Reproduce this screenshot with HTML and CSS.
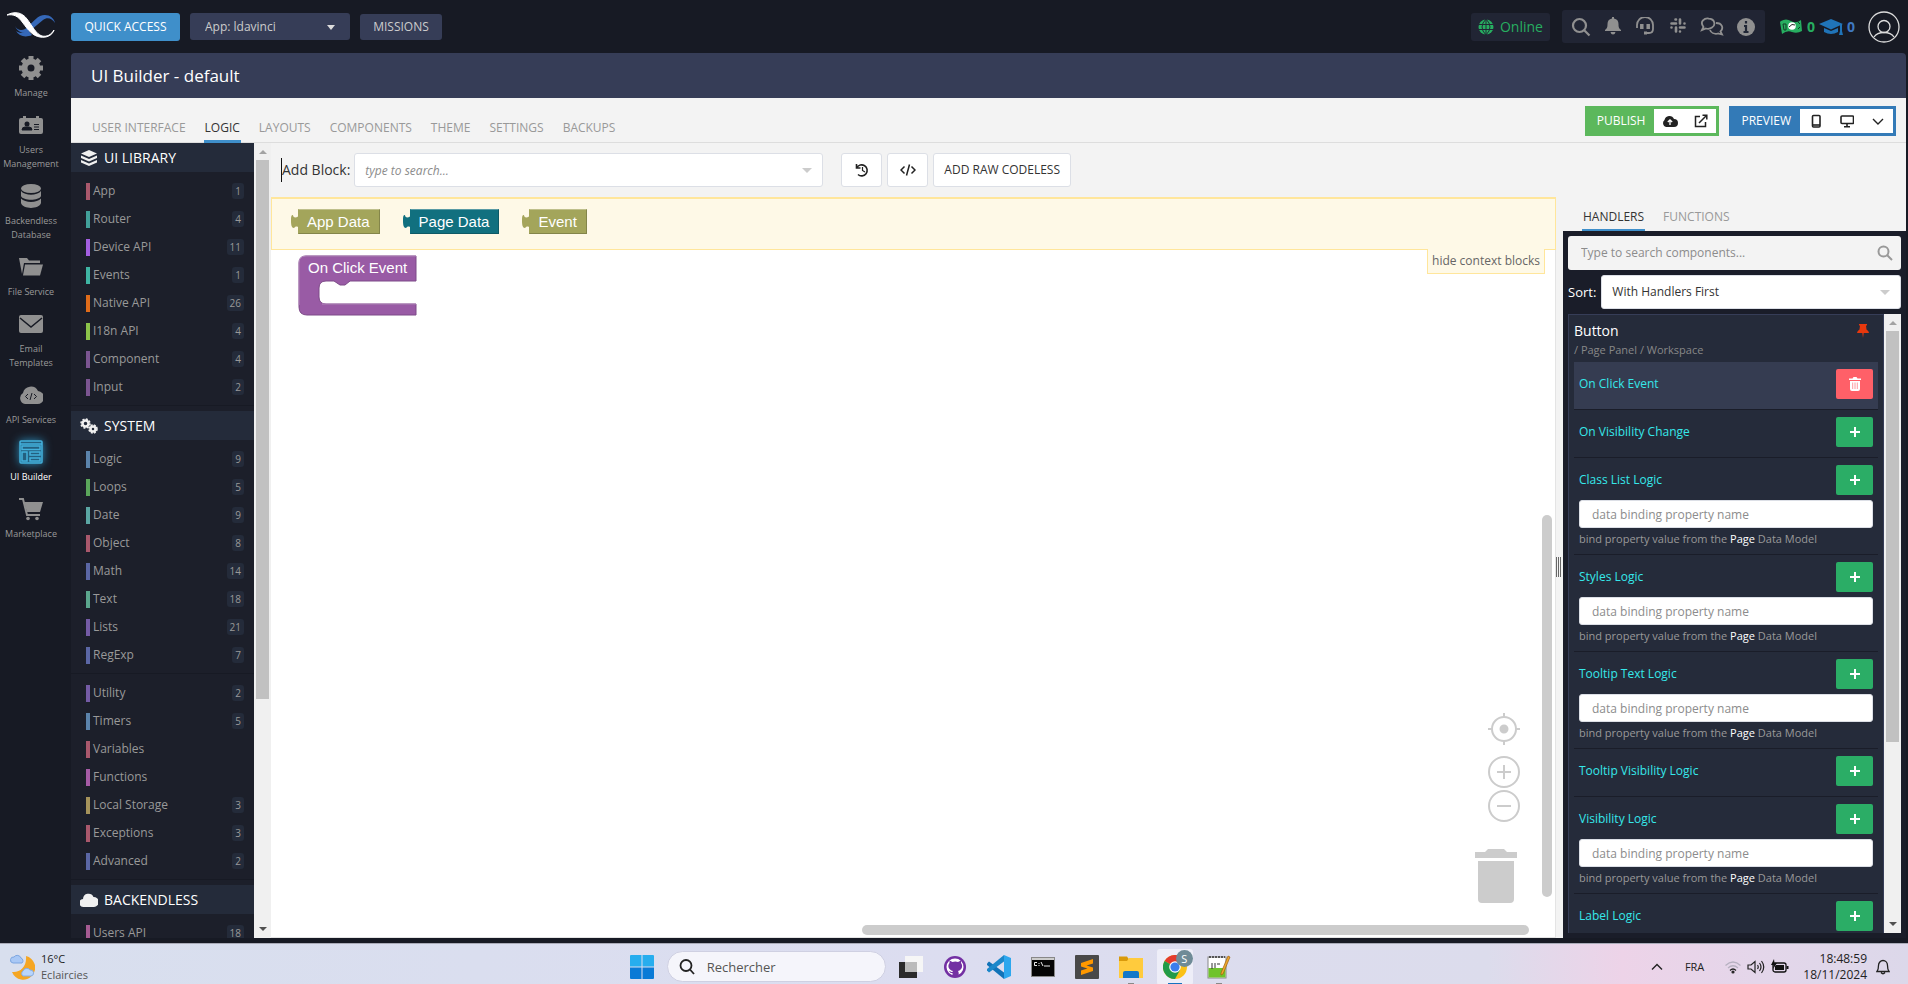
FILE: index.html
```html
<!DOCTYPE html>
<html lang="en">
<head>
  <meta charset="UTF-8">
  <meta name="viewport" content="width=device-width, initial-scale=1.0">
  <title>UI Builder - default</title>
  <link rel="stylesheet" href="styles.css">
</head>
<body>
  <div class="app">
    <nav class="rail">
      <a class="logo" href="#" aria-label="Home">
        <svg width="50" height="26" viewBox="0 0 50 26">
          <path d="M9 14c3 7 10 9 16 4L37 8c4-3 9-2 12 3C48 5 41 1 34 4c-6 3-10 10-15 13-4 2-8 1-10-3z" fill="#3568b8"/>
          <path d="M10 19c3 5 9 7 16 4l-4-5c-4 3-8 4-12 1z" fill="#3568b8"/>
          <path d="M1 3c7-4 15-3 20 4 6 8 9 15 15 17 5 1 9-1 12-6-2 6-8 8-14 7-7-1-12-7-17-14C12 4 8 2 1 3z" fill="#fff" stroke="#fff"/>
        </svg>
      </a>
      <a class="rail-item" href="#">
        <svg width="24" height="24" viewBox="0 0 24 24" fill="none" stroke="#909090"><circle cx="12" cy="12" r="6.5" stroke-width="6"/><path d="M12 0v5M12 19v5M0 12h5M19 12h5M3.5 3.500l3.500 3.500M17 17l3.500 3.500M20.500 3.500L17 7M7 17l-3.500 3.500" stroke-width="5"/></svg>
        <span>Manage</span>
      </a>
      <a class="rail-item" href="#">
        <svg width="24" height="24" viewBox="0 0 24 24"><path d="M2 5h2V3h3v2h10V3h3v2h2q2 0 2 2v12q0 2-2 2H2q-2 0-2-2V7q0-2 2-2z" fill="#909090"/><circle cx="8" cy="11" r="2.500" fill="#171a24"/><path d="M3 17q0-3 3-3h4q3 0 3 3zM15 11.500h5M15 14h5M15 16.500h5" stroke="#171a24" fill="#171a24"/></svg>
        <span>Users<br>Management</span>
      </a>
      <a class="rail-item" href="#">
        <svg width="24" height="24" viewBox="0 0 24 24" fill="#909090"><ellipse cx="12" cy="4.500" rx="10" ry="4.500"/><path d="M2 7c4 5 16 5 20 0v5c-2 5-18 5-20 0zM2 14.500c4 4.500 16 4.500 20 0V19c-2 6.500-18 6.500-20 0z"/></svg>
        <span>Backendless<br>Database</span>
      </a>
      <a class="rail-item" href="#">
        <svg width="24" height="24" viewBox="0 0 24 24" fill="#909090"><path d="M0 3h8l2 2.500h11V8H5L3 19z"/><path d="M6 9.500h18L21 20.500H4z"/></svg>
        <span>File Service</span>
      </a>
      <a class="rail-item" href="#">
        <svg width="24" height="24" viewBox="0 0 24 24"><rect y="3" width="24" height="18" rx="2" fill="#909090"/><path d="M1 6l11 9 11-9" fill="none" stroke="#171a24" stroke-width="1.500"/></svg>
        <span>Email<br>Templates</span>
      </a>
      <a class="rail-item" href="#">
        <svg width="24" height="24" viewBox="0 0 24 24"><path d="M6 21a6 6 0 0 1-2-11 8 8 0 0 1 15-2 6.500 6.500 0 0 1-1 13z" fill="#909090"/><path d="M9 11l-2.500 2.500L9 16M15 11l2.500 2.500L15 16M13 10l-2 7" fill="none" stroke="#171a24"/></svg>
        <span>API Services</span>
      </a>
      <a class="rail-item active" href="#">
        <svg width="24" height="24" viewBox="0 0 24 24" fill="#236080" stroke="#44b1dc" stroke-width="1.500"><rect x="1" y="1" width="22" height="22" rx="1"/><path d="M1 4h22"/><rect x="3" y="6" width="18" height="3.500"/><rect x="3" y="12" width="5" height="9"/><rect x="11" y="12" width="10" height="3"/><rect x="11" y="18" width="10" height="3"/></svg>
        <span>UI Builder</span>
      </a>
      <a class="rail-item" href="#">
        <svg width="24" height="24" viewBox="0 0 24 24" fill="#909090"><path d="M5 5h19l-3 10H8z"/><circle cx="9" cy="21.500" r="1.800"/><circle cx="18" cy="21.500" r="1.800"/><path d="M0 2h4l4 16h13" fill="none" stroke="#909090" stroke-width="2"/></svg>
        <span>Marketplace</span>
      </a>
    </nav>

    <div class="content">
      <header class="topbar">
        <button class="btn-quick">QUICK ACCESS</button>
        <div class="app-select">
          <select aria-label="Application"><option>App: ldavinci</option></select>
        </div>
        <button class="btn-missions">MISSIONS</button>
        <div class="online">
          <svg width="16" height="16" viewBox="0 0 16 16"><circle cx="8" cy="8" r="7.500" fill="#27ae60"/><path d="M0 5.500h16M0 10.500h16M8 0v16M8 0q-8 8 0 16M8 0q8 8 0 16" fill="none" stroke="#212736"/></svg>
          Online
        </div>
        <div class="tools">
          <button aria-label="Search"><svg width="20" height="20" viewBox="0 0 20 20" fill="none" stroke="#909090" stroke-width="2.200"><circle cx="8.500" cy="8.500" r="6.500"/><path d="M13 13l5.500 5.500"/></svg></button>
          <button aria-label="Notifications"><svg width="20" height="20" viewBox="0 0 20 20" fill="#909090"><path d="M9 0h2v1.500c3 .500 4.500 2.500 4.500 5.500 0 4 .800 4.500 2.500 6V14H2v-1c1.700-1.500 2.500-2 2.500-6 0-3 1.500-5 4.500-5.500zM7.500 15h5q-.500 2.500-2.500 2.500T7.500 15z"/></svg></button>
          <button aria-label="Support"><svg width="20" height="20" viewBox="0 0 20 20" fill="none" stroke="#909090" stroke-width="1.800"><path d="M2 11V8a8 8 0 0 1 16 0v4c0 3-2 4-4 4h-4"/><path d="M6.800 7v5M13.200 7v5" stroke-width="3.500"/><path d="M9 16h3" stroke-width="3"/></svg></button>
          <button aria-label="Slack"><svg width="20" height="20" viewBox="0 0 20 20" fill="none" stroke="#909090" stroke-width="2.600" stroke-linecap="round"><path d="M8 6.500h-4.500M8 2.500v0M12 2.500v4M12 10.500h4.500M16.500 6.500v0M12 14.500v0M8 10.500v4M3.500 10.500v0M7.500 2.500h.500"/></svg></button>
          <button aria-label="Chat"><svg width="24" height="20" viewBox="0 0 24 20" fill="none" stroke="#909090" stroke-width="1.800"><path d="M2 13l1.500-3C-1 4 5 1 8.500 1.500 15 2 16 8 12 10.500c-2 1.500-4 1.500-6 1z"/><path d="M16 6c6 0 8 5 4.500 8.500L22 17.500l-4-1c-4 1-7-1-8-3.500"/></svg></button>
          <button aria-label="Info"><svg width="20" height="20" viewBox="0 0 20 20"><circle cx="10" cy="10" r="9" fill="#909090"/><path d="M10 4v2.500M8 9h2v6M7.500 15h5" fill="none" stroke="#212736" stroke-width="2.200"/></svg></button>
        </div>
        <div class="scores">
          <svg width="24" height="18" viewBox="0 0 24 18"><path d="M2 3q5-3 10 0t10-1l1 11q-5 3-10 1T3 16L1 4z" fill="#27ae60"/><path d="M4 6h3v6H5z" fill="none" stroke="#123d27"/><circle cx="13" cy="8" r="3.800" fill="#fff"/><path d="M10 9q3-4 6-2" fill="none" stroke="#222"/><path d="M19 4l2 2M19 11l2-2" stroke="#123d27"/></svg>
          <b class="green">0</b>
          <svg width="24" height="18" viewBox="0 0 24 18" fill="#2074b8"><path d="M12 1l12 5-12 5.500L0 6z"/><path d="M5 10l7 3 7-3v4q-7 4-14 0zM21 6h2v7l1 4h-4l1-4z"/></svg>
          <b class="blue">0</b>
        </div>
        <button class="avatar" aria-label="Account"><svg width="32" height="32" viewBox="0 0 32 32" fill="none" stroke="#ddd" stroke-width="1.300"><circle cx="16" cy="16" r="15"/><circle cx="16" cy="15.500" r="6"/><path d="M6 26c2-3 5-4.500 10-4.500S24 23 26 26"/></svg></button>
      </header>

      <div class="page-title"><h1>UI Builder - default</h1></div>

      <div class="tabbar">
        <nav class="tabs">
          <a href="#">USER INTERFACE</a>
          <a href="#" class="current">LOGIC</a>
          <a href="#">LAYOUTS</a>
          <a href="#">COMPONENTS</a>
          <a href="#">THEME</a>
          <a href="#">SETTINGS</a>
          <a href="#">BACKUPS</a>
        </nav>
        <div class="actions publish">
          <button class="main-action">PUBLISH</button>
          <button class="icon-action" aria-label="Publish to cloud"><svg width="16" height="14" viewBox="0 0 16 14"><path d="M4 13a4 4 0 0 1-1.500-7 5 5 0 0 1 9.500-1 4 4 0 0 1 0 8z" fill="#222"/><path d="M8 11V6.500M5.800 8L8 6l2.200 2" fill="none" stroke="#fff" stroke-width="1.300"/></svg></button>
          <button class="icon-action" aria-label="Open published page"><svg width="14" height="14" viewBox="0 0 14 14" fill="none" stroke="#222" stroke-width="1.500"><path d="M6 2.500H1.500v10h10V8M5 9l7.500-7.500M8.500 1.200h4.300v4.300"/></svg></button>
        </div>
        <div class="actions preview">
          <button class="main-action">PREVIEW</button>
          <button class="icon-action" aria-label="Mobile"><svg width="14" height="14" viewBox="0 0 14 14" fill="none" stroke="#222" stroke-width="1.600"><rect x="3.500" y="1.500" width="7.500" height="11.500" rx="1"/><path d="M3.500 11h7.500"/></svg></button>
          <button class="icon-action" aria-label="Desktop"><svg width="14" height="14" viewBox="0 0 14 14" fill="none" stroke="#222" stroke-width="1.600"><rect x="1" y="2" width="12.500" height="7.500" rx="1"/><path d="M7 9.500V12M4 12.700h6"/></svg></button>
          <button class="icon-action" aria-label="More"><svg width="14" height="14" viewBox="0 0 14 14" fill="none" stroke="#222" stroke-width="1.400"><path d="M2 5l5 5 5-5"/></svg></button>
        </div>
      </div>

      <div class="builder">
        <aside class="library">
          <section>
            <h2><svg width="18" height="18" viewBox="0 0 18 18" fill="#f0f0f0"><path d="M9 1l8 3.500-8 3.500-8-3.500zM1 6.500l8 3.500 8-3.500V9l-8 3.500L1 9zM1 11l8 3.500 8-3.500v2.500L9 17l-8-3.500z"/></svg>UI LIBRARY</h2>
            <ul>
              <li class="rose">App<i>1</i></li>
              <li class="teal">Router<i>4</i></li>
              <li class="violet">Device API<i>11</i></li>
              <li class="mint">Events<i>1</i></li>
              <li class="orange">Native API<i>26</i></li>
              <li class="lime">I18n API<i>4</i></li>
              <li class="plum">Component<i>4</i></li>
              <li class="plum">Input<i>2</i></li>
            </ul>
          </section>
          <section>
            <h2><svg width="18" height="18" viewBox="0 0 18 18" fill="none" stroke="#f0f0f0"><circle cx="5.500" cy="6.500" r="3" stroke-width="2.500"/><circle cx="5.500" cy="6.500" r="4.500" stroke-width="1.500" stroke-dasharray="2 1.500"/><circle cx="13" cy="12" r="2.500" stroke-width="2.500"/><circle cx="13" cy="12" r="4" stroke-width="1.500" stroke-dasharray="2 1.200"/></svg>SYSTEM</h2>
            <ul>
              <li class="steel">Logic<i>9</i></li>
              <li class="green-bar">Loops<i>5</i></li>
              <li class="aqua">Date<i>9</i></li>
              <li class="rose">Object<i>8</i></li>
              <li class="indigo">Math<i>14</i></li>
              <li class="sea">Text<i>18</i></li>
              <li class="purple">Lists<i>21</i></li>
              <li class="indigo">RegExp<i>7</i></li>
            </ul>
            <ul>
              <li class="purple">Utility<i>2</i></li>
              <li class="steel">Timers<i>5</i></li>
              <li class="rose">Variables</li>
              <li class="magenta">Functions</li>
              <li class="sand">Local Storage<i>3</i></li>
              <li class="rose">Exceptions<i>3</i></li>
              <li class="indigo">Advanced<i>2</i></li>
            </ul>
          </section>
          <section>
            <h2><svg width="18" height="18" viewBox="0 0 18 18" fill="#f0f0f0"><path d="M4 16a4 4 0 0 1-1-8 5.500 5.500 0 0 1 10.500-2A5 5 0 0 1 14 16z"/></svg>BACKENDLESS</h2>
            <ul>
              <li class="pink">Users API<i>18</i></li>
            </ul>
          </section>
        </aside>
        <div class="scrollbar lib-scroll"><span class="up"></span><div class="thumb"></div><span class="down"></span></div>

        <main class="editor">
          <div class="toolbar">
            <label for="block">Add Block:</label>
            <div class="combo"><input id="block" type="text" placeholder="type to search..."></div>
            <button aria-label="History"><svg width="14" height="14" viewBox="0 0 14 14" fill="none" stroke="#222" stroke-width="1.600"><path d="M1.500 1v4h4M1.800 4.800A5.500 5.500 0 1 1 3 11.500"/><path d="M7.500 4v3.500L10 9" stroke-width="1.200"/></svg></button>
            <button aria-label="Code"><svg width="16" height="14" viewBox="0 0 16 14" fill="none" stroke="#222" stroke-width="1.500"><path d="M4.500 3.500L1 7l3.500 3.500M11.500 3.500L15 7l-3.500 3.500M9.500 1.500l-3 11"/></svg></button>
            <button class="raw">ADD RAW CODELESS</button>
          </div>

          <div class="context">
            <div class="block olive"><svg width="8" height="25" viewBox="0 0 8 25"><path d="M8 7.500C5 9.500 3 8 3 6 1 6 1 8 1 11s0 8 3 8c1-1 2-2 4-1z"/></svg><span>App Data</span></div>
            <div class="block petrol"><svg width="8" height="25" viewBox="0 0 8 25"><path d="M8 7.500C5 9.500 3 8 3 6 1 6 1 8 1 11s0 8 3 8c1-1 2-2 4-1z"/></svg><span>Page Data</span></div>
            <div class="block olive"><svg width="8" height="25" viewBox="0 0 8 25"><path d="M8 7.500C5 9.500 3 8 3 6 1 6 1 8 1 11s0 8 3 8c1-1 2-2 4-1z"/></svg><span>Event</span></div>
            <button class="hide-context">hide context blocks</button>
          </div>

          <div class="canvas">
            <svg class="event-block" width="119" height="61" viewBox="0 0 119 61">
              <path d="M8 1h110v25H52l-5 4h-5l-6-4h-8q-7 0-7 7v9q0 7 7 7h90v11H9q-8 0-8-8V8q0-7 7-7z" fill="#995ba5" stroke="#7d4a88"/>
              <path d="M1 50V8q0-7 7-7h110M24 49h94" fill="none" stroke="#b88cc0"/>
              <text x="10" y="18">On Click Event</text>
            </svg>
            <div class="canvas-tools">
              <button aria-label="Center"><svg width="32" height="32" viewBox="0 0 32 32" fill="none" stroke="#ccc" stroke-width="2"><circle cx="16" cy="16" r="12"/><circle cx="16" cy="16" r="3.500" fill="#ccc"/><path d="M16 0v4M16 28v4M0 16h4M28 16h4"/></svg></button>
              <button aria-label="Zoom in"><svg width="32" height="32" viewBox="0 0 32 32" fill="none" stroke="#ccc" stroke-width="2"><circle cx="16" cy="16" r="15"/><path d="M9 16h14M16 9v14"/></svg></button>
              <button aria-label="Zoom out"><svg width="32" height="32" viewBox="0 0 32 32" fill="none" stroke="#ccc" stroke-width="2"><circle cx="16" cy="16" r="15"/><path d="M9 16h14"/></svg></button>
            </div>
            <svg class="trash" width="42" height="54" viewBox="0 0 42 54" fill="#ccc"><path d="M0 3h10l3-3h16l3 3h10v6H0zM3 12h36v38q0 4-4 4H7q-4 0-4-4z"/></svg>
            <div class="v-thumb"></div>
            <div class="h-thumb"></div>
          </div>
        </main>

        <div class="splitter"><span></span></div>

        <aside class="handlers">
          <nav class="tabs">
            <a href="#" class="current">HANDLERS</a>
            <a href="#">FUNCTIONS</a>
          </nav>
          <div class="handlers-body">
            <div class="search">
              <input type="text" aria-label="Search components" placeholder="Type to search components...">
              <svg width="16" height="16" viewBox="0 0 16 16" fill="none" stroke="#999" stroke-width="2"><circle cx="6.500" cy="6.500" r="5"/><path d="M10 10l5 5"/></svg>
            </div>
            <div class="sort">
              <label for="sort">Sort:</label>
              <div class="sort-select"><select id="sort"><option>With Handlers First</option></select></div>
            </div>
            <div class="list-wrap">
              <div class="list">
                <div class="list-head">
                  <h3>Button</h3>
                  <svg width="12" height="14" viewBox="0 0 12 14" fill="#e8380d"><path d="M2 0h8v1.500H9l.500 4Q12 7 12 9H0q0-2 2.500-3.500l.500-4H2zM5.300 9h1.400L6 14z"/></svg>
                </div>
                <p class="path">/ Page Panel / Workspace</p>
                <div class="handler selected">
                  <div class="row"><a href="#">On Click Event</a><button class="remove" aria-label="Delete"><svg width="12" height="14" viewBox="0 0 12 14"><path d="M0 1.500h3.500L4.500 0h3l1 1.500H12V3H0zM1 4h10v8q0 2-2 2H3q-2 0-2-2z" fill="#fff"/><path d="M3.700 5.500v6.500M6 5.500v6.500M8.300 5.500v6.500" stroke="#ff9a9f"/></svg></button></div>
                </div>
                <div class="handler">
                  <div class="row"><a href="#">On Visibility Change</a><button aria-label="Add"></button></div>
                </div>
                <div class="handler">
                  <div class="row"><a href="#">Class List Logic</a><button aria-label="Add"></button></div>
                  <input type="text" aria-label="Class List Logic" placeholder="data binding property name">
                  <p>bind property value from the <b>Page</b> Data Model</p>
                </div>
                <div class="handler">
                  <div class="row"><a href="#">Styles Logic</a><button aria-label="Add"></button></div>
                  <input type="text" aria-label="Styles Logic" placeholder="data binding property name">
                  <p>bind property value from the <b>Page</b> Data Model</p>
                </div>
                <div class="handler">
                  <div class="row"><a href="#">Tooltip Text Logic</a><button aria-label="Add"></button></div>
                  <input type="text" aria-label="Tooltip Text Logic" placeholder="data binding property name">
                  <p>bind property value from the <b>Page</b> Data Model</p>
                </div>
                <div class="handler">
                  <div class="row"><a href="#">Tooltip Visibility Logic</a><button aria-label="Add"></button></div>
                </div>
                <div class="handler">
                  <div class="row"><a href="#">Visibility Logic</a><button aria-label="Add"></button></div>
                  <input type="text" aria-label="Visibility Logic" placeholder="data binding property name">
                  <p>bind property value from the <b>Page</b> Data Model</p>
                </div>
                <div class="handler">
                  <div class="row"><a href="#">Label Logic</a><button aria-label="Add"></button></div>
                </div>
              </div>
              <div class="scrollbar list-scroll"><span class="up"></span><div class="thumb"></div><span class="down"></span></div>
            </div>
          </div>
        </aside>
      </div>
    </div>
  </div>

  <footer class="taskbar">
    <div class="weather">
      <svg width="26" height="26" viewBox="0 0 26 26"><path d="M17 2a12 12 0 1 1-14 16c8 1 15-5 14-16z" fill="#f5a623"/><path d="M4 9a3 3 0 0 1 1-6 4 4 0 0 1 7 1 3 3 0 0 1 1 5z" fill="#a9c8f5" stroke="#7ba5e0"/><path d="M14 22a3 3 0 0 1 0-5 4 4 0 0 1 7-1 3 3 0 0 1 1 6z" fill="#b9d5fb" stroke="#86aee6"/></svg>
      <div>16°C<br><span>Eclaircies</span></div>
    </div>
    <div class="dock">
      <button aria-label="Start"><svg width="24" height="24" viewBox="0 0 24 24"><path d="M0 1q0-1 1-1h10.500v11.500H0zM12.500 0H23q1 0 1 1v10.500H12.500z" fill="#27adee"/><path d="M0 12.500h11.500V24H1q-1 0-1-1zM12.500 12.500H24V23q0 1-1 1H12.500z" fill="#0a7ad6"/></svg></button>
      <label class="start-search">
        <svg width="16" height="16" viewBox="0 0 16 16" fill="none" stroke="#222" stroke-width="1.800"><circle cx="7" cy="6.500" r="5.500"/><path d="M11 10.500l4 4.500"/></svg>
        <input type="text" placeholder="Rechercher">
      </label>
      <button aria-label="Task view"><svg width="24" height="24" viewBox="0 0 24 24"><rect y="7" width="18" height="16" fill="#2b2b2b"/><rect x="6" y="1" width="18" height="16" fill="#f6f6f6"/><rect x="6" y="7" width="12" height="10" fill="#bbb"/></svg></button>
      <button aria-label="GitHub Desktop"><svg width="24" height="24" viewBox="0 0 24 24"><circle cx="12" cy="12" r="11" fill="#7330a3"/><circle cx="12" cy="12" r="8.500" fill="#fff"/><path d="M9.500 21v-3c-2 .500-3-1-3.500-2 1.500 0 2 1.500 3.500 1 .200-1 .500-1 .500-1-5-1-5.500-6-3.500-8V5.500l3 1.500q3-.800 5.500 0l3-1.500V8c2 2 1.500 7-3 8 1 1 .700 3 .700 5z" fill="#7330a3"/></svg></button>
      <button aria-label="Visual Studio Code"><svg width="24" height="24" viewBox="0 0 24 24"><path d="M0 8.500l2-2 15 11V24L0 10z" fill="#1173b8"/><path d="M0 15.500l2 2L17 6.500V0L0 14z" fill="#1b87ca"/><path d="M17 0l7 3v18l-7 3z" fill="#2da7ee"/></svg></button>
      <button aria-label="Command prompt"><svg width="24" height="24" viewBox="0 0 24 24"><rect x=".500" y="2.500" width="23" height="19" fill="#050505" stroke="#888"/><path d="M1 4h22" stroke="#ccc" stroke-width="2"/><path d="M6 7.500H3.500v3H6M8 8v1M8 10v1M10 7l2 4M13 11h6" fill="none" stroke="#eee"/></svg></button>
      <button aria-label="Sublime Text"><svg width="24" height="24" viewBox="0 0 24 24"><rect width="24" height="24" rx="1" fill="#494949"/><path d="M6 8l12-4v4.500l-6.500 2L18 12.500V16L6 20v-4.500l6.500-2L6 11.500z" fill="#ff9800"/></svg></button>
      <button aria-label="File Explorer" class="running"><svg width="24" height="24" viewBox="0 0 24 24"><path d="M0 1.500h8l2 3v5H0z" fill="#d99a0b"/><path d="M0 6h8l2-3h14v20H0z" fill="#ffcb3d"/><path d="M4 23v-5q0-2 2-2h12q2 0 2 2v5z" fill="#1277c8"/></svg></button>
      <button aria-label="Chrome" class="focused">
        <svg width="24" height="24" viewBox="0 0 24 24"><circle cx="12" cy="12" r="12" fill="#fbc116"/><path d="M12 12L1.600 6A12 12 0 0 1 22.400 6z" fill="#e33b2e"/><path d="M1.600 6A12 12 0 0 0 12 24l5-9-5-3z" fill="#229b48"/><circle cx="12" cy="12" r="5.800" fill="#fff"/><circle cx="12" cy="12" r="4.600" fill="#3b7ded"/></svg>
        <span class="profile">S</span>
      </button>
      <button aria-label="Notepad++" class="running"><svg width="24" height="24" viewBox="0 0 24 24"><rect x="1" y="2" width="18" height="21" fill="#fff" stroke="#888"/><path d="M1.500 13h17v9.500h-17z" fill="#6fc32b"/><path d="M2 2h16" stroke="#555" stroke-width="2" stroke-dasharray="2 1"/><path d="M5 8v6M8 8v5M10 9h3" stroke="#333"/><path d="M21 1l2 1-7 17-2 1v-2z" fill="#f0a92c" stroke="#9b5f10" stroke-width=".700"/></svg></button>
    </div>
    <div class="tray">
      <svg width="12" height="12" viewBox="0 0 12 12" fill="none" stroke="#222" stroke-width="1.400"><path d="M1 8.500l5-5 5 5"/></svg>
      <span class="lang">FRA</span>
      <div class="status-icons">
        <svg width="16" height="16" viewBox="0 0 16 16" fill="none" stroke="#b6b0c0" stroke-width="1.200"><path d="M.500 6.500q7.500-7 15 0"/><path d="M3 9q5-4.500 10 0"/><path d="M5 11.500q3-3 6 0" stroke="#222"/><circle cx="8" cy="13" r="1" fill="#222" stroke="#222"/></svg>
        <svg width="18" height="16" viewBox="0 0 18 16" fill="none" stroke="#222" stroke-width="1.200"><path d="M1 6h3l4-3.500v11L4 10H1zM10.500 6q1.500 2 0 4M12.500 4q3 4 0 8M14.500 2q4.500 6 0 12"/></svg>
        <svg width="18" height="16" viewBox="0 0 18 16"><rect x="2" y="4" width="13" height="9" rx="2" fill="none" stroke="#111" stroke-width="1.300"/><path d="M4 6h9v5H4zM15.500 7h2v3h-2zM3 0L0 6h2.500L2 10l4-6H3.500z" fill="#111"/></svg>
      </div>
      <div class="clock">18:48:59<br>18/11/2024</div>
      <svg width="14" height="16" viewBox="0 0 14 16" fill="none" stroke="#222" stroke-width="1.300"><path d="M1 12.500q1.500-2 1.500-6a4.500 5 0 0 1 9 0q0 4 1.500 6zM5 13.500q2 2.500 4 0"/></svg>
    </div>
  </footer>
</body>
</html>
```
FILE: styles.css
```css
* {
  box-sizing: border-box;
}

body {
  margin: 0;
  height: 100vh;
  display: flex;
  flex-direction: column;
  overflow: hidden;
  background: #171a24;
  font: 12px/16px "Open Sans", "Noto Sans", sans-serif;
  color: #333;
}

a {
  color: inherit;
  text-decoration: none;
}

h1, h2, h3, p, ul {
  margin: 0;
  padding: 0;
  font-weight: 400;
}

button, input, select {
  font: inherit;
  color: inherit;
  margin: 0;
  border: 0;
}

button {
  display: flex;
  align-items: center;
  justify-content: center;
  padding: 0;
  background: none;
  cursor: pointer;
}

svg {
  display: block;
  flex: none;
}

.app {
  flex: 1;
  min-height: 0;
  display: flex;
  padding-bottom: 5px;
}

/* left rail */
.rail {
  width: 71px;
  flex: none;
  padding-right: 9px;
  text-align: center;
  font-size: 9px;
  line-height: 14px;
  color: #999;
}

.logo {
  display: block;
  padding: 12px 0 18px 6px;
}

.rail-item {
  display: flex;
  flex-direction: column;
  align-items: center;
  gap: 6px;
  margin-bottom: 13px;
}

.rail-item.active {
  color: #fff;
}

.rail-item.active svg {
  filter: drop-shadow(0 0 5px #2c8bb8);
}

.content {
  flex: 1;
  min-width: 0;
  display: flex;
  flex-direction: column;
  padding-right: 2px;
}

/* top bar */
.topbar {
  height: 53px;
  flex: none;
  display: flex;
  align-items: center;
  padding-right: 6px;
  color: #ccc;
}

.btn-quick {
  height: 28px;
  width: 109px;
  border-radius: 3px;
  background: #3f8fca;
  color: #fff;
}

.app-select {
  position: relative;
  margin: 0 10px;
}

.app-select select {
  appearance: none;
  width: 160px;
  height: 27px;
  padding: 0 15px;
  border-radius: 3px;
  background: #363d57;
}

.app-select::after,
.combo::after,
.sort-select::after {
  content: "";
  position: absolute;
  right: 15px;
  top: 12px;
  border: 4px solid transparent;
  border-top: 5px solid #ddd;
  border-bottom: 0;
}

.btn-missions {
  height: 26px;
  width: 82px;
  border-radius: 3px;
  background: #363d57;
}

.online {
  display: flex;
  align-items: center;
  gap: 6px;
  height: 28px;
  margin-left: auto;
  padding: 0 7px;
  border-radius: 3px;
  background: #212534;
  color: #27ae60;
  font-size: 14px;
}

.tools {
  display: flex;
  align-items: center;
  justify-content: space-between;
  width: 203px;
  height: 33px;
  margin: 0 14px 0 12px;
  padding: 0 9px;
  border-radius: 3px;
  background: #212534;
}

.scores {
  display: flex;
  align-items: center;
  gap: 4px;
  margin-right: 13px;
  font-size: 14px;
}

.green {
  color: #27ae60;
}

.blue {
  color: #3f78c0;
}

.page-title {
  flex: none;
  height: 45px;
  padding: 0 20px;
  border-radius: 4px 4px 0 0;
  background: #363d57;
  color: #fff;
}

.page-title h1 {
  font-size: 17px;
  line-height: 45px;
}

/* tabs */
.tabbar {
  flex: none;
  height: 45px;
  display: flex;
  align-items: flex-end;
  padding: 0 10px 0 20px;
  border-bottom: 1px solid #ddd;
  background: #f3f3f3;
}

.tabs {
  display: flex;
  gap: 17px;
  margin-bottom: -1px;
  color: #999;
}

.tabs a {
  padding: 0 1px 4px;
  border-bottom: 3px solid transparent;
}

.tabs a.current {
  color: #333;
  border-color: #3f8fca;
}

.actions {
  display: flex;
  align-items: center;
  height: 30px;
  margin: 0 0 6px 10px;
  padding: 3px;
}

.publish {
  margin-left: auto;
  background: #5cb85c;
}

.preview {
  background: #337ab7;
}

.main-action {
  padding: 0 9px;
  height: 24px;
  color: #fff;
}

.icon-action {
  width: 31px;
  height: 24px;
  background: #fff;
}

.builder {
  flex: 1;
  min-height: 0;
  display: flex;
  background: #f3f3f3;
}

/* block library */
.library {
  width: 183px;
  flex: none;
  overflow: hidden;
  background: #1c1f2a;
}

.library h2 {
  display: flex;
  align-items: center;
  gap: 6px;
  height: 29px;
  padding-left: 9px;
  background: #242b3a;
  color: #fff;
  font-size: 14px;
}

.library ul {
  list-style: none;
  padding: 5px 10px 4px 15px;
  border-bottom: 1px solid #171a24;
}

.library section {
  margin-bottom: 5px;
}

.library li {
  display: flex;
  align-items: center;
  height: 28px;
  color: #999;
}

.library li::before {
  content: "";
  width: 4px;
  height: 17px;
  margin-right: 3px;
  background: currentColor;
}

.library li i {
  margin-left: auto;
  padding: 0 3px;
  border-radius: 3px;
  background: #242b3a;
  font-size: 10px;
  font-style: normal;
}

li.rose::before { background: #a9586c; }
li.teal::before { background: #42a09a; }
li.violet::before { background: #a35fe0; }
li.mint::before { background: #3fb5a3; }
li.orange::before { background: #e06c1a; }
li.lime::before { background: #8bc34a; }
li.plum::before { background: #7b5591; }
li.steel::before { background: #5b83ab; }
li.green-bar::before { background: #5ba65b; }
li.aqua::before { background: #5ba6a3; }
li.indigo::before { background: #5b67a5; }
li.sea::before { background: #5ba68d; }
li.purple::before { background: #745ba5; }
li.magenta::before { background: #a55ba5; }
li.sand::before { background: #a5935b; }
li.pink::before { background: #a55b92; }

.scrollbar {
  width: 17px;
  flex: none;
  display: flex;
  flex-direction: column;
  align-items: center;
  justify-content: space-between;
  padding: 7px 2px;
  background: #f0f0f0;
}

.scrollbar .thumb {
  width: 13px;
  margin: 6px 0 auto;
  background: #c1c1c1;
}

.lib-scroll .thumb {
  height: 69%;
}

.list-scroll .thumb {
  height: 68%;
}

.scrollbar .up,
.scrollbar .down {
  border: 4px solid transparent;
}

.scrollbar .up {
  border-top: 0;
  border-bottom-color: #a3a3a3;
}

.scrollbar .down {
  border-bottom: 0;
  border-top-color: #505050;
}

/* editor */
.editor {
  flex: 1;
  min-width: 0;
  display: flex;
  flex-direction: column;
}

.toolbar {
  height: 54px;
  flex: none;
  display: flex;
  align-items: center;
  padding-left: 10px;
}

.toolbar label {
  padding: 4px 4px 4px 0;
  border-left: 1px solid #111;
  font-size: 14px;
  font-weight: 500;
}

.combo {
  position: relative;
  flex: 0 1 469px;
  margin-right: 18px;
}

.combo::after,
.sort-select::after {
  top: 15px;
  right: 11px;
  border-width: 5px;
  border-top-color: #ccc;
  border-bottom: 0;
}

.combo input {
  width: 100%;
  height: 34px;
  padding: 0 10px;
  border: 1px solid #dcdfe6;
  border-radius: 3px;
  background: #fff;
  font-style: italic;
}

::placeholder {
  color: #8c8c8c;
  opacity: 1;
}

.toolbar button {
  width: 41px;
  height: 34px;
  margin-right: 5px;
  border: 1px solid #dcdfe6;
  border-radius: 3px;
  background: #fff;
}

.toolbar .raw {
  width: auto;
  padding: 0 10px;
}

.context {
  position: relative;
  z-index: 1;
  display: flex;
  gap: 22px;
  height: 53px;
  flex: none;
  padding: 10px 18px;
  border: 1px solid #ffe69b;
  border-top-width: 2px;
  background: #fef9e7;
}

.block {
  display: flex;
  height: 25px;
  font: 15px/23px "Liberation Sans", Arial, sans-serif;
  color: #fff;
}

.block span {
  padding: 0 9px 0 8px;
  border: 1px solid;
}

.olive svg { fill: #a5a55b; }
.olive span {
  background: #a3a55b;
  border-color: #bfc08c #83854a #83854a #a3a55b;
}

.petrol svg { fill: #11707f; }
.petrol span {
  background: #11707f;
  border-color: #589ba5 #0e5a66 #0e5a66 #11707f;
}

.hide-context {
  position: absolute;
  right: 10px;
  top: 50px;
  height: 25px;
  padding: 0 4px;
  border: 1px solid #ffe69b;
  border-top: 0;
  background: #fef9e7;
  color: #666;
}

.canvas {
  position: relative;
  flex: 1;
  min-height: 0;
  border-right: 1px solid #e4e4e4;
  border-bottom: 1px solid #e4e4e4;
  background: #fff;
}

.event-block {
  position: absolute;
  left: 27px;
  top: 5px;
}

.event-block text {
  font: 15px "Liberation Sans", Arial, sans-serif;
  fill: #fff;
}

.canvas-tools {
  position: absolute;
  right: 35px;
  bottom: 115px;
}

.canvas-tools button {
  margin-top: 2px;
}

.canvas-tools button:first-child {
  margin-bottom: 11px;
}

.trash {
  position: absolute;
  right: 38px;
  bottom: 34px;
}

.v-thumb,
.h-thumb {
  position: absolute;
  border-radius: 5px;
  background: #ccc;
}

.v-thumb {
  right: 3px;
  top: 265px;
  bottom: 40px;
  width: 10px;
}

.h-thumb {
  left: 46%;
  right: 26px;
  bottom: 2px;
  height: 10px;
}

.splitter {
  width: 7px;
  flex: none;
  display: flex;
  align-items: center;
}

.splitter span {
  width: 5px;
  height: 20px;
  margin-top: 52px;
  background: repeating-linear-gradient(90deg, #666 0 1px, #f3f3f3 1px 2px);
}

/* handlers panel */
.handlers {
  width: 343px;
  flex: none;
  display: flex;
  flex-direction: column;
}

.handlers .tabs {
  height: 89px;
  flex: none;
  align-items: flex-end;
  padding-left: 19px;
}

.handlers-body {
  flex: 1;
  min-height: 0;
  display: flex;
  flex-direction: column;
  gap: 5px;
  padding: 5px;
  background: #1a1d29;
}

.search {
  display: flex;
  align-items: center;
  height: 34px;
  flex: none;
  padding-right: 8px;
  border-radius: 3px;
  background: #f3f3f3;
}

.search input {
  flex: 1;
  padding: 0 13px;
  background: none;
}

.sort {
  display: flex;
  align-items: center;
  flex: none;
  gap: 5px;
  color: #fff;
}

.sort label {
  font-size: 13px;
}

.sort-select {
  position: relative;
  flex: 1;
}

.sort-select select {
  appearance: none;
  width: 100%;
  height: 34px;
  padding: 0 10px;
  border: 1px solid #dcdfe6;
  border-radius: 3px;
  background: #fff;
  color: #333;
}

.list-wrap {
  flex: 1;
  min-height: 0;
  display: flex;
}

.list {
  flex: 1;
  min-width: 0;
  overflow: hidden;
  padding: 6px 5px 0;
  border: 1px solid #363d57;
  border-bottom: 0;
  background: #252b3a;
}

.list-head {
  display: flex;
  align-items: center;
  justify-content: space-between;
  padding-right: 9px;
  color: #fff;
}

.list-head h3 {
  font-size: 14px;
  line-height: 20px;
}

.path {
  margin-bottom: 3px;
  font-size: 11px;
  line-height: 18px;
  color: #888;
}

.handler {
  padding: 7px 5px 10px;
  border-bottom: 1px solid #1a1d29;
}

.handler.selected {
  background: #353c51;
}

.handler .row {
  display: flex;
  align-items: center;
  justify-content: space-between;
  color: #36e8ea;
}

.handler button {
  position: relative;
  width: 37px;
  height: 30px;
  border-radius: 2px;
  background: #2bad66;
}

.handler button::before,
.handler button::after {
  content: "";
  position: absolute;
  width: 10px;
  height: 2px;
  background: #fff;
}

.handler button::after {
  width: 2px;
  height: 10px;
}

.handler .remove {
  background: #ff6068;
}

.handler .remove::before,
.handler .remove::after {
  display: none;
}

.handler input {
  display: block;
  width: 100%;
  height: 28px;
  margin: 5px 0 3px;
  padding: 0 12px;
  border: 1px solid #dcdfe6;
  border-radius: 3px;
  background: #fff;
}

.handler p {
  margin-bottom: -3px;
  font-size: 11px;
  color: #999;
}

.handler p b {
  color: #fff;
  font-weight: 500;
}

/* taskbar */
.taskbar {
  height: 41px;
  flex: none;
  display: flex;
  align-items: center;
  padding: 5px 18px 0 0;
  border-top: 1px solid #a9abb8;
  background: linear-gradient(90deg, #d8dfee 0%, #dcddf0 50%, #dcdcec 78%, #edd3e8 85%, #e4d6ea 92%, #dcd8ea 100%);
  color: #222;
  font-size: 11px;
}

.weather {
  width: 33%;
  flex: none;
  display: flex;
  align-items: center;
  gap: 6px;
  padding-left: 9px;
}

.weather span {
  color: #555;
}

.dock {
  display: flex;
  align-items: center;
  gap: 20px;
  margin-left: 6px;
}

.start-search {
  display: flex;
  align-items: center;
  gap: 10px;
  width: 219px;
  height: 31px;
  margin: 0 -7px;
  padding: 0 11px;
  border: 1px solid #cfd0e2;
  border-radius: 16px;
  background: #f5f5fb;
}

.start-search input {
  flex: 1;
  min-width: 0;
  background: none;
  font-size: 13px;
}

.start-search ::placeholder {
  color: #555;
}

.dock button {
  position: relative;
}

.dock .focused {
  height: 36px;
  margin: -1px -6px;
  padding: 0 6px;
  border-radius: 3px;
  background: #eeeef8;
}

.profile {
  position: absolute;
  top: 1px;
  right: 0;
  width: 17px;
  height: 17px;
  border-radius: 50%;
  background: #6f8b97;
  color: #fff;
  line-height: 17px;
}

.running::after,
.focused::after {
  content: "";
  position: absolute;
  bottom: -6px;
  width: 6px;
  height: 2px;
  background: #888;
}

.focused::after {
  bottom: 0;
  width: 14px;
  background: #1672c0;
}

.tray {
  display: flex;
  align-items: center;
  margin-left: auto;
}

.lang {
  margin: 0 21px 0 22px;
}

.status-icons {
  display: flex;
  gap: 6px;
}

.clock {
  margin: 0 9px 0 14px;
  text-align: right;
  font-size: 12px;
}
```
